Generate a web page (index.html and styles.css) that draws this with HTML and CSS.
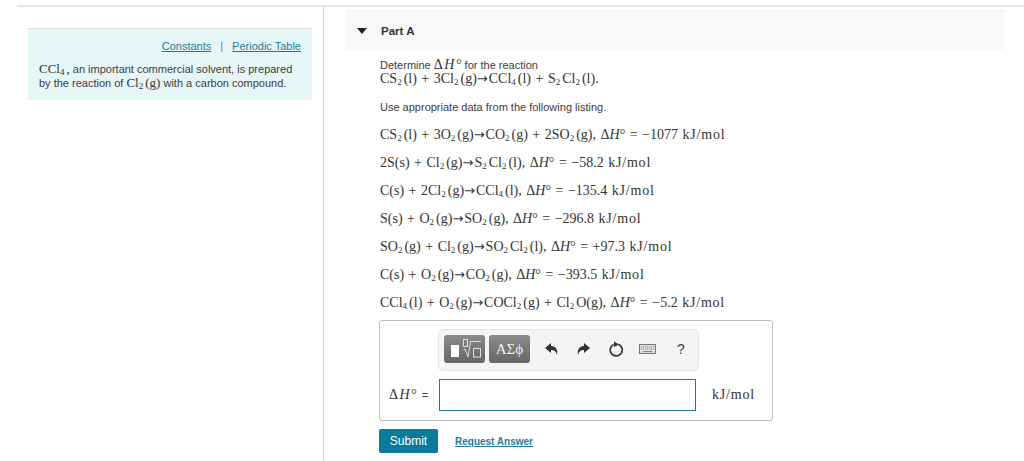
FILE: index.html
```html
<!DOCTYPE html>
<html lang="en">
<head>
<meta charset="utf-8">
<title>Part A</title>
<link rel="stylesheet" href="styles.css">
</head>
<body>
<div class="page">
  <div class="columns">
    <aside class="side">
      <div class="info">
        <div class="links"><a href="#">Constants</a><span class="sep">|</span><a href="#">Periodic Table</a></div>
        <p class="intro"><span class="m small">CCl<sub>4</sub>,</span> an important commercial solvent, is prepared<br>by the reaction of <span class="m small">Cl<sub>2</sub>(g)</span> with a carbon compound.</p>
      </div>
    </aside>
    <main class="main">
      <header class="part">
        <svg class="caret" width="10" height="6" viewBox="0 0 10 6"><path d="M0 0h10L5 6z" fill="#222"/></svg>
        <h2>Part A</h2>
      </header>
      <section class="body">
        <p class="prompt">Determine <span class="m">Δ<i>H</i>°</span> for the reaction<br><span class="m">CS<sub>2</sub>(l) + 3Cl<sub>2</sub>(g)<span class="arr">→</span>CCl<sub>4</sub>(l) + S<sub>2</sub>Cl<sub>2</sub>(l).</span></p>
        <p class="use">Use appropriate data from the following listing.</p>
        <p class="eq m">CS<sub>2</sub>(l) + 3O<sub>2</sub>(g)<span class="arr">→</span>CO<sub>2</sub>(g) + 2SO<sub>2</sub>(g), Δ<i>H</i>° = −1077 <span class="u">kJ/mol</span></p>
        <p class="eq m">2S(s) + Cl<sub>2</sub>(g)<span class="arr">→</span>S<sub>2</sub>Cl<sub>2</sub>(l), Δ<i>H</i>° = −58.2 <span class="u">kJ/mol</span></p>
        <p class="eq m">C(s) + 2Cl<sub>2</sub>(g)<span class="arr">→</span>CCl<sub>4</sub>(l), Δ<i>H</i>° = −135.4 <span class="u">kJ/mol</span></p>
        <p class="eq m">S(s) + O<sub>2</sub>(g)<span class="arr">→</span>SO<sub>2</sub>(g), Δ<i>H</i>° = −296.8 <span class="u">kJ/mol</span></p>
        <p class="eq m">SO<sub>2</sub>(g) + Cl<sub>2</sub>(g)<span class="arr">→</span>SO<sub>2</sub>Cl<sub>2</sub>(l), Δ<i>H</i>° = +97.3 <span class="u">kJ/mol</span></p>
        <p class="eq m">C(s) + O<sub>2</sub>(g)<span class="arr">→</span>CO<sub>2</sub>(g), Δ<i>H</i>° = −393.5 <span class="u">kJ/mol</span></p>
        <p class="eq m">CCl<sub>4</sub>(l) + O<sub>2</sub>(g)<span class="arr">→</span>COCl<sub>2</sub>(g) + Cl<sub>2</sub>O(g), Δ<i>H</i>° = −5.2 <span class="u">kJ/mol</span></p>
        <div class="answer">
          <div class="toolbar">
            <button class="tpl" type="button" aria-label="Templates">
              <svg width="38" height="26" viewBox="0 0 38 26">
                <rect x="5" y="9" width="8" height="12" fill="#fff"/>
                <rect x="17.500" y="3.500" width="4" height="7" fill="none" stroke="#ddd"/>
                <path d="M17.500 14l1.500-1 3 8 2.500-15.500h10.500" fill="none" stroke="#ddd"/>
                <rect x="27.500" y="12.500" width="7" height="8.500" fill="none" stroke="#ddd"/>
              </svg>
            </button>
            <button class="tpl greek" type="button">ΑΣϕ</button>
            <svg class="ico undo" width="14" height="14" viewBox="0 0 14 14"><path d="M6 1L0 6l6 5V8c3 0 5 1 6 5 1-5-1-9-6-9z" fill="#333"/></svg>
            <svg class="ico redo" width="14" height="14" viewBox="0 0 14 14"><path d="M8 1l6 5-6 5V8c-3 0-5 1-6 5C1 8 3 4 8 4z" fill="#333"/></svg>
            <svg class="ico reset" width="15" height="16" viewBox="0 0 15 16"><path d="M9.500 3.400A6 6 0 1 1 4.500 3.600" fill="none" stroke="#333" stroke-width="1.700"/><path d="M5 0.500l5 3-5 2.600z" fill="#333"/></svg>
            <svg class="ico kbd" width="17" height="10" viewBox="0 0 17 10"><rect x=".5" y=".5" width="16" height="9" fill="#ddd" stroke="#777"/><path d="M2 3h13M2 5h13" stroke="#888" stroke-dasharray="1 1"/><path d="M4 7.500h9" stroke="#888"/></svg>
            <span class="help">?</span>
          </div>
          <div class="entry">
            <label class="lbl"><span class="m">Δ<i>H</i>°</span> =</label>
            <input class="field" type="text" aria-label="Delta H">
            <span class="unit m"><span class="u">kJ/mol</span></span>
          </div>
        </div>
        <div class="actions">
          <button class="submit" type="button">Submit</button>
          <a class="req" href="#">Request Answer</a>
        </div>
      </section>
    </main>
  </div>
</div>
</body>
</html>
```

FILE: styles.css
```css
* { box-sizing: border-box; }
html, body { margin: 0; padding: 0; height: 461px; overflow: hidden; background: #fff; }
body { font-family: "Liberation Sans", Arial, sans-serif; color: #3c3c3c; font-size: 11px; }
p { margin: 0; }
.page { padding: 5px 0 0 17px; height: 461px; }
.columns { display: flex; height: 456px; border-top: 2px solid #e8e8e8; }
.side { width: 307px; flex: none; border-right: 1px solid #c3d0de; padding: 21px 0 0 11px; }
.info { width: 284px; height: 72px; background: #e6f6f7; border-top: 1px solid #dfe3e6; padding: 11px 11px 0; }
.links { display: flex; justify-content: flex-end; align-items: center; font-size: 11px; line-height: 13px; }
.links a { color: #1c7c9c; text-decoration: underline; }
.sep { margin: 0 9px; color: #777; }
.intro { margin-top: 9px; line-height: 14px; font-size: 11px; }
.m { font-family: "Liberation Serif", "Times New Roman", serif; font-size: 14px; word-spacing: 1px; color: #333; }
.m.small { font-size: 13px; }
.m i { font-style: italic; }
.prompt i, .lbl i { margin: 0 1.500px; }
.arr { font-family: "DejaVu Sans", sans-serif; font-size: 13px; line-height: 0; margin-right: 1px; }
.u { letter-spacing: .8px; }
sub { font-size: 9px; line-height: 0; vertical-align: -2px; margin-right: 2px; }
.main { flex: 1; padding: 3px 20px 0 22px; }
.part { display: flex; align-items: center; height: 40px; background: #f8f8f8; border-top: 1px solid #f0f0f0; padding-left: 11px; }
.part h2 { margin: 0 0 0 14px; font-size: 11.500px; font-weight: bold; color: #333; }
.body { padding: 8px 0 0 33px; }
.prompt { padding-left: 1px; line-height: 13px; font-size: 11px; }
.use { padding-left: 1px; margin-top: 14px; line-height: 14px; font-size: 11px; }
.eq { padding-left: 1px; margin-top: 11px; line-height: 17px; height: 17px; white-space: nowrap; }
.use + .eq { margin-top: 12px; }
.answer { width: 394px; height: 101px; margin-top: 9px; border: 1px solid #bbb; border-radius: 3px; padding: 8px 0 0 8px; }
.toolbar { display: flex; align-items: center; width: 261px; height: 42px; margin-left: 50px; padding: 0 5px 2px; background: #f4f4f4; border: 1px solid #e4e4e4; border-radius: 5px; }
.tpl { display: flex; align-items: center; justify-content: center; width: 41px; height: 28px; padding: 0; border: 0; border-radius: 3px; background: linear-gradient(#8a8a8a, #666); color: #f0f0f0; }
.greek { margin-left: 4px; font-family: "Liberation Serif", serif; font-size: 15px; }
.ico { flex: none; }
.undo { margin-left: 15px; }
.redo { margin-left: 17px; }
.reset { margin-left: 19px; }
.kbd { margin-left: 15px; }
.help { margin-left: 21px; font-size: 14px; color: #444; }
.entry { display: flex; align-items: center; margin-top: 8px; }
.lbl { width: 51px; padding-left: 1px; font-size: 11px; word-spacing: 2px; white-space: nowrap; }
.field { width: 257px; height: 32px; margin: 0; border: 1px solid #1c7c9c; background: #fff; outline: 0; }
.unit { margin-left: 16px; }
.actions { display: flex; align-items: center; margin-top: 8px; }
.submit { width: 59px; height: 24px; padding: 0; border: 0; border-radius: 2px; background: #0a7a9c; color: #fff; font: 12px "Liberation Sans", sans-serif; }
.req { margin-left: 17px; color: #1c7c9c; font-weight: bold; font-size: 10px; text-decoration: underline; }
```
